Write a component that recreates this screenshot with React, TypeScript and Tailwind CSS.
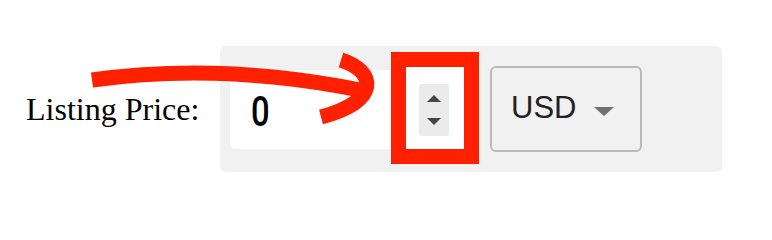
import React from 'react'

const red = '#ff2000'

function Spinner() {
  return (
    <div className="relative z-20 w-[30px] h-[52px] bg-[#ebebeb] rounded-[2px] flex flex-col items-center justify-center gap-[16px] mt-[1px]">
      <span className="w-0 h-0 border-l-[7px] border-r-[7px] border-b-[7px] border-l-transparent border-r-transparent border-b-[#464646]" />
      <span className="w-0 h-0 border-l-[7px] border-r-[7px] border-t-[7px] border-l-transparent border-r-transparent border-t-[#464646]" />
    </div>
  )
}

export default function App() {
  return (
    <div className="relative w-[772px] h-[204px] bg-white overflow-hidden">
      <div className="flex items-center pt-[46px] pl-[26px]">
        {/* Label */}
        <label className="w-[194px] shrink-0 text-[32px] leading-none text-black font-['Liberation_Serif',serif]">
          Listing Price:
        </label>

        {/* Price field */}
        <div className="w-[502px] h-[126px] shrink-0 rounded-[6px] bg-[#f1f1f1] flex items-center pl-[10px]">
          <div className="w-[240px] h-[79px] bg-white rounded-[5px] flex items-center justify-between pl-[21px] pr-[21px]">
            <span className="inline-block mt-[6px] origin-left scale-x-[0.78] text-[42px] leading-none font-medium text-black font-['Roboto',sans-serif]">
              0
            </span>
            <Spinner />
          </div>

          <div className="ml-[20px] w-[152px] h-[86px] border-2 border-[#b9b9b9] rounded-[6px] bg-[#f1f1f1] flex items-center pl-[19px]">
            <span className="mb-[4px] text-[31px] leading-none text-[#222] font-['Liberation_Sans',Arial,sans-serif]">USD</span>
            <span className="ml-[18px] mt-[5px] w-0 h-0 border-l-[10px] border-r-[10px] border-t-[9px] border-l-transparent border-r-transparent border-t-[#707070]" />
          </div>
        </div>
      </div>

      {/* highlight box around the spinner */}
      <div className="absolute left-[391px] top-[52px] w-[88px] h-[112px] border-[15px] border-[#ff2000] bg-white z-10" />

      {/* annotation arrow */}
      <svg className="absolute left-0 top-0 z-30 pointer-events-none" width="772" height="204" viewBox="0 0 772 204">
        <path d="M92 80 Q 220 62 360 90" fill="none" stroke={red} strokeWidth="15" />
        <path d="M341 60 C 376 71 381 101 321 117" fill="none" stroke={red} strokeWidth="15" />
      </svg>
    </div>
  )
}
